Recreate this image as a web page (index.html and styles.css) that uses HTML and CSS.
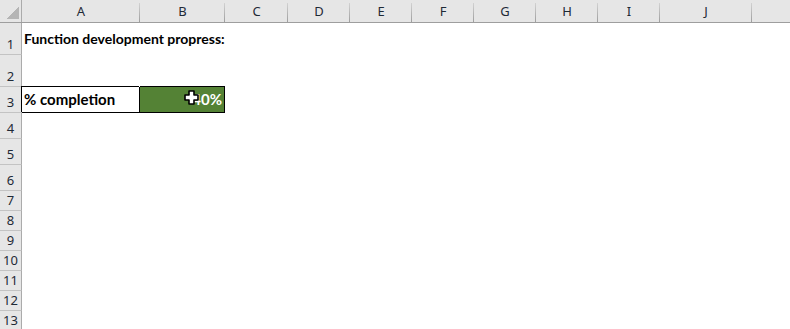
FILE: index.html
```html
<!DOCTYPE html>
<html lang="en">
<head>
  <meta charset="UTF-8">
  <title>Function development progress</title>
  <link rel="stylesheet" href="styles.css">
</head>
<body>
  <div class="sheet">
    <!-- column headers -->
    <div class="col-head corner"><span class="corner-mark"></span></div>
    <div class="col-head">A</div>
    <div class="col-head">B</div>
    <div class="col-head">C</div>
    <div class="col-head">D</div>
    <div class="col-head">E</div>
    <div class="col-head">F</div>
    <div class="col-head">G</div>
    <div class="col-head">H</div>
    <div class="col-head">I</div>
    <div class="col-head">J</div>
    <div class="col-head last"></div>

    <!-- row 1 -->
    <div class="row-head">1</div>
    <div class="cell title">Function development propress:</div>
    <div class="cell"></div><div class="cell"></div><div class="cell"></div><div class="cell"></div><div class="cell"></div>
    <div class="cell"></div><div class="cell"></div><div class="cell"></div><div class="cell"></div><div class="cell"></div>

    <!-- row 2 -->
    <div class="row-head">2</div>
    <div class="cell"></div><div class="cell"></div><div class="cell"></div><div class="cell"></div><div class="cell"></div><div class="cell"></div>
    <div class="cell"></div><div class="cell"></div><div class="cell"></div><div class="cell"></div><div class="cell"></div>

    <!-- row 3 -->
    <div class="row-head">3</div>
    <div class="cell label">% completion</div>
    <div class="cell progress">
      40%
      <svg class="cursor" width="15" height="15" viewBox="0 0 15 15">
        <path d="M5 1h5v4h4v5h-4v4h-5v-4h-4v-5h4z" fill="#fff" stroke="#000" stroke-width="1.6" stroke-linejoin="round"/>
      </svg>
    </div>
    <div class="cell"></div><div class="cell"></div><div class="cell"></div><div class="cell"></div><div class="cell"></div>
    <div class="cell"></div><div class="cell"></div><div class="cell"></div><div class="cell"></div>

    <div class="row-head">4</div><div class="cell span"></div>
    <div class="row-head">5</div><div class="cell span"></div>
    <div class="row-head">6</div><div class="cell span"></div>
    <div class="row-head">7</div><div class="cell span"></div>
    <div class="row-head">8</div><div class="cell span"></div>
    <div class="row-head">9</div><div class="cell span"></div>
    <div class="row-head">10</div><div class="cell span"></div>
    <div class="row-head">11</div><div class="cell span"></div>
    <div class="row-head">12</div><div class="cell span"></div>
    <div class="row-head">13</div><div class="cell span"></div>
  </div>
</body>
</html>
```

FILE: styles.css
```css
* {
  margin: 0;
  padding: 0;
  box-sizing: border-box;
}
body {
  background-color: #fff;
  font-family: "Noto Sans", Arial, sans-serif;
  overflow: hidden;
}
.sheet {
  display: grid;
  grid-template-columns: 22px 118px 85px 63px 62px 62px 62px 62px 62px 62px 92px 1fr;
  grid-template-rows: 23px 32px 32px 26px 26px 26px 26px 20px 20px 20px 20px 20px 20px 20px;
  width: 790px;
}
.col-head {
  position: relative;
  background-color: #e6e6e6;
  border-bottom: 1px solid #9e9e9e;
  color: #1f2a36;
  font-size: 13px;
  line-height: 22px;
  text-align: center;
}
.col-head::after {
  content: '';
  position: absolute;
  right: 0;
  top: 3px;
  bottom: 0;
  width: 1px;
  background: linear-gradient(#d2d2d2, #9e9e9e);
}
.col-head.last::after {
  display: none;
}
.corner::after {
  top: 0;
  background: #ababab;
}
.corner-mark {
  position: absolute;
  left: 7px;
  top: 7px;
  width: 12px;
  height: 12px;
  background: linear-gradient(to bottom right, transparent 50%, #b5b5b5 50%);
}
.row-head {
  display: flex;
  align-items: flex-end;
  justify-content: center;
  padding-bottom: 2px;
  background-color: #e6e6e6;
  border-right: 1px solid #ababab;
  border-bottom: 1px solid #c3c3c3;
  color: #1f2a36;
  font-size: 13px;
  line-height: 16px;
}
.cell {
  display: flex;
  align-items: flex-end;
  min-width: 0;
  white-space: nowrap;
  font-family: Lato, "Liberation Sans", sans-serif;
  font-weight: 700;
  font-size: 14px;
  color: #000;
}
.cell.span {
  grid-column: 2 / -1;
}
.title {
  overflow: visible;
  padding: 0 0 8px 2px;
  line-height: 16px;
}
.label {
  padding: 0 0 5px 2px;
  font-size: 15px;
  line-height: 16px;
  border-right: 1px solid #000;
  border-bottom: 1px solid #000;
  box-shadow: -1px -1px 0 #000;
}
.progress {
  position: relative;
  justify-content: flex-end;
  padding: 0 2px 5px 0;
  font-size: 15px;
  line-height: 16px;
  background-color: #548235;
  color: #fff;
  border-right: 1px solid #000;
  border-bottom: 1px solid #000;
  box-shadow: 0 -1px 0 #000;
}
.cursor {
  position: absolute;
  left: 44px;
  top: 3px;
}
```
